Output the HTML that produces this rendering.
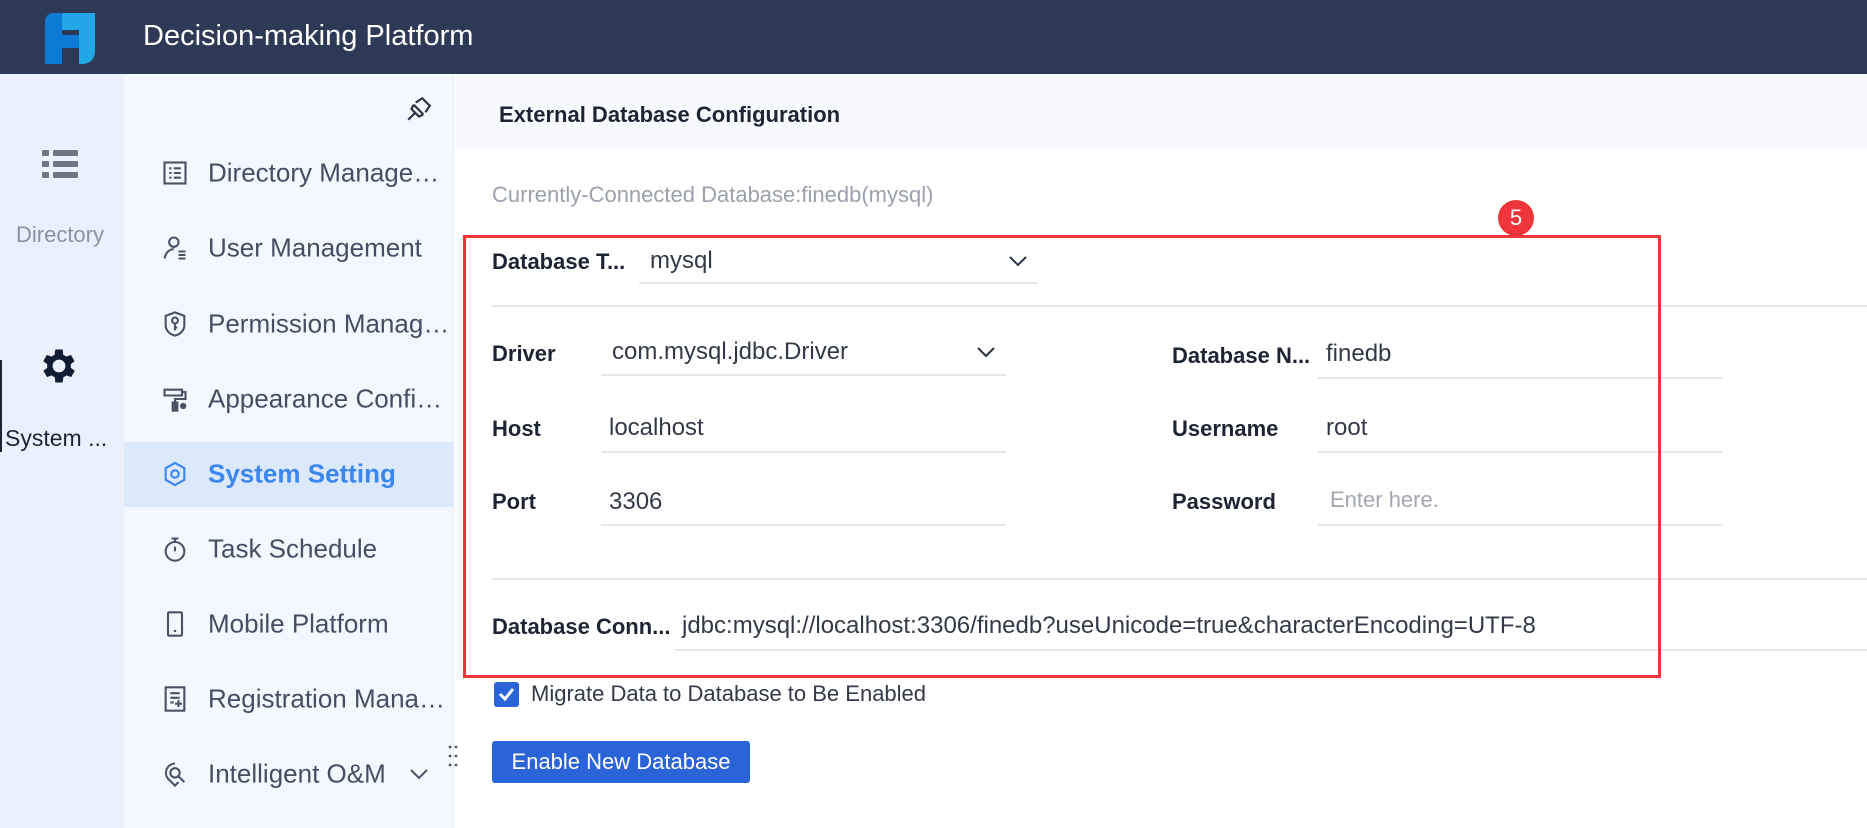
<!DOCTYPE html>
<html><head><meta charset="utf-8"><style>
*{box-sizing:border-box;margin:0;padding:0}
body{width:1867px;height:828px;overflow:hidden;font-family:"Liberation Sans",sans-serif;background:#fff;position:relative}
.a{position:absolute}
.hdr{left:0;top:0;width:1867px;height:74px;background:#2c3a55}
.rail{left:0;top:74px;width:124px;height:754px;background:#eaf1fc}
.side{left:124px;top:74px;width:330px;height:754px;background:#f3f7fe;border-right:1px solid #e8ecf2}
.it{left:208px;font-size:26px;color:#454f63;white-space:nowrap;transform:translateY(-50%)}
.ic{left:161px;width:28px;height:28px;transform:translateY(-50%)}
.lab{font-size:22px;font-weight:bold;color:#1e2433;transform:translateY(-50%);white-space:nowrap}
.val{font-size:24px;color:#333a46;transform:translateY(-50%);white-space:nowrap}
.ul{height:2px;background:#e4e7ec}
</style></head><body>
<div class="a hdr"></div>
<svg class="a" style="left:44px;top:13px" width="52" height="52" viewBox="0 0 52 52">
<path d="M18 0H9C4 0 1 4 1 9v42h17V35h17V22H18z" fill="#0b7bd6"/>
<path d="M18 0h33v38c0 8-5 13-13 13h-3V17H18z" fill="#21a7e6"/>
</svg>
<div class="a" style="left:143px;top:20px;font-size:29px;color:#fff">Decision-making Platform</div>
<div class="a rail"></div>
<div class="a side"></div>
<svg class="a" style="left:42px;top:149px" width="36" height="30" viewBox="0 0 36 30" fill="#6e7686"><rect x="0" y="1" width="7" height="6" rx="1"/><rect x="11" y="1" width="25" height="6" rx="1"/><rect x="0" y="12" width="7" height="6" rx="1"/><rect x="11" y="12" width="25" height="6" rx="1"/><rect x="0" y="23" width="7" height="6" rx="1"/><rect x="11" y="23" width="25" height="6" rx="1"/></svg>
<div class="a" style="left:0;width:120px;text-align:center;top:222px;font-size:22px;color:#8a93a3">Directory</div>
<svg class="a" style="left:37px;top:344px" width="44" height="44" viewBox="0 0 24 24"><path fill="#101c33" d="M19.4 13a7.6 7.6 0 0 0 0-2l2.1-1.6-2-3.5-2.5 1a7 7 0 0 0-1.7-1L15 3h-4l-.4 2.9a7 7 0 0 0-1.7 1l-2.5-1-2 3.5L6.6 11a7.6 7.6 0 0 0 0 2l-2.1 1.6 2 3.5 2.5-1a7 7 0 0 0 1.7 1L11 21h4l.4-2.9a7 7 0 0 0 1.7-1l2.5 1 2-3.5zM13 15.5a3.5 3.5 0 1 1 0-7 3.5 3.5 0 0 1 0 7z" transform="translate(-1 0)"/></svg>
<div class="a" style="left:0;top:360px;width:2px;height:92px;background:#1e2433"></div>
<div class="a" style="left:5px;top:425px;font-size:23px;color:#1e2433">System ...</div>
<svg class="a" style="left:405px;top:95px" width="28" height="28" viewBox="0 0 26 26" fill="none" stroke="#2a3142" stroke-width="2"><path d="M3 23l7-7M8 9l9 9M10 7l6-4 7 7-4 6M8 9l-2 4 7 7 4-2"/></svg>
<div class="a" style="left:124px;top:442px;width:330px;height:65px;background:#dce9fa"></div>
<svg class="a ic" style="top:173px" viewBox="0 0 24 24" fill="none" stroke="#4a5366" stroke-width="1.8"><rect x="3" y="3" width="18" height="18"/><path d="M7 8h2M11 8h6M7 12h2M11 12h6M7 16h2M11 16h6"/></svg>
<div class="a it" style="top:173px">Directory Manage…</div>
<svg class="a ic" style="top:248px" viewBox="0 0 24 24" fill="none" stroke="#4a5366" stroke-width="1.8"><circle cx="11" cy="7" r="4"/><path d="M3 21c1-5 4-8 8-8M15 15h6M15 18h6M15 21h6"/></svg>
<div class="a it" style="top:248px">User Management</div>
<svg class="a ic" style="top:324px" viewBox="0 0 24 24" fill="none" stroke="#4a5366" stroke-width="1.8"><path d="M12 2l8 3v8c0 5-4 8-8 9-4-1-8-4-8-9V5z"/><circle cx="12" cy="9" r="2.5"/><path d="M12 11.5v6M12 15h2"/></svg>
<div class="a it" style="top:324px">Permission Manag…</div>
<svg class="a ic" style="top:399px" viewBox="0 0 24 24" fill="none" stroke="#4a5366" stroke-width="1.8"><path d="M3 4h15v5H3zM18 6h3v6h-9v3"/><rect x="10" y="15" width="4" height="7" fill="#4a5366"/><circle cx="19" cy="18" r="1.8" fill="#4a5366"/></svg>
<div class="a it" style="top:399px">Appearance Confi…</div>
<svg class="a ic" style="top:474px" viewBox="0 0 24 24" fill="none" stroke="#3b86f0" stroke-width="1.8"><path d="M12 2.5l8 4.5v10l-8 4.5-8-4.5V7z"/><circle cx="12" cy="12" r="3.2"/></svg>
<div class="a it" style="top:474px;color:#3b86f0;font-weight:bold">System Setting</div>
<svg class="a ic" style="top:549px" viewBox="0 0 24 24" fill="none" stroke="#4a5366" stroke-width="1.8"><circle cx="12" cy="14" r="8"/><path d="M9 3h6M12 3v3M12 10v4"/></svg>
<div class="a it" style="top:549px">Task Schedule</div>
<svg class="a ic" style="top:624px" viewBox="0 0 24 24" fill="none" stroke="#4a5366" stroke-width="1.8"><rect x="6" y="2" width="12" height="20" rx="1"/><path d="M11 18h2"/></svg>
<div class="a it" style="top:624px">Mobile Platform</div>
<svg class="a ic" style="top:699px" viewBox="0 0 24 24" fill="none" stroke="#4a5366" stroke-width="1.8"><rect x="4" y="2" width="16" height="20"/><path d="M8 7h8M8 11h8M8 15h3M15 13v6M12 16h6"/></svg>
<div class="a it" style="top:699px">Registration Mana…</div>
<svg class="a ic" style="top:774px" viewBox="0 0 24 24" fill="none" stroke="#4a5366" stroke-width="1.8"><path d="M12 3a8 8 0 0 0-6 13l6 6 3-3"/><circle cx="12" cy="11" r="4"/><path d="M15 14l5 5"/></svg>
<div class="a it" style="top:774px">Intelligent O&amp;M</div>
<svg class="a" style="left:409px;top:767px" width="20" height="14" viewBox="0 0 20 14" fill="none" stroke="#4a5366" stroke-width="2"><path d="M2 3l8 8 8-8"/></svg>
<svg class="a" style="left:448px;top:744px" width="10" height="24" viewBox="0 0 10 24" fill="#555"><circle cx="2" cy="3" r="1.4"/><circle cx="8" cy="3" r="1.4"/><circle cx="2" cy="12" r="1.4"/><circle cx="8" cy="12" r="1.4"/><circle cx="2" cy="21" r="1.4"/><circle cx="8" cy="21" r="1.4"/></svg>

<div class="a" style="left:455px;top:74px;width:1412px;height:77px;background:#f7f9fc"></div>
<div class="a lab" style="left:499px;top:115px;font-size:22px">External Database Configuration</div>
<div class="a" style="left:492px;top:182px;font-size:22px;color:#9ba1ab">Currently-Connected Database:finedb(mysql)</div>

<div class="a lab" style="left:492px;top:262px">Database T...</div>
<div class="a val" style="left:650px;top:261px">mysql</div>
<svg class="a" style="left:1008px;top:254px" width="20" height="14" viewBox="0 0 20 14" fill="none" stroke="#2a3142" stroke-width="2"><path d="M2 3l8 8 8-8"/></svg>
<div class="a ul" style="left:639px;top:282px;width:399px"></div>
<div class="a ul" style="left:492px;top:305px;width:1375px"></div>

<div class="a lab" style="left:492px;top:354px">Driver</div>
<div class="a val" style="left:612px;top:352px">com.mysql.jdbc.Driver</div>
<svg class="a" style="left:976px;top:345px" width="20" height="14" viewBox="0 0 20 14" fill="none" stroke="#2a3142" stroke-width="2"><path d="M2 3l8 8 8-8"/></svg>
<div class="a ul" style="left:601px;top:374px;width:405px"></div>
<div class="a lab" style="left:492px;top:429px">Host</div>
<div class="a val" style="left:609px;top:428px">localhost</div>
<div class="a ul" style="left:601px;top:451px;width:405px"></div>
<div class="a lab" style="left:492px;top:502px">Port</div>
<div class="a val" style="left:609px;top:502px">3306</div>
<div class="a ul" style="left:601px;top:524px;width:405px"></div>

<div class="a lab" style="left:1172px;top:356px">Database N...</div>
<div class="a val" style="left:1326px;top:354px">finedb</div>
<div class="a ul" style="left:1318px;top:377px;width:405px"></div>
<div class="a lab" style="left:1172px;top:429px">Username</div>
<div class="a val" style="left:1326px;top:428px">root</div>
<div class="a ul" style="left:1318px;top:451px;width:405px"></div>
<div class="a lab" style="left:1172px;top:502px">Password</div>
<div class="a val" style="left:1330px;top:500px;color:#a3a8b0;font-size:22px">Enter here.</div>
<div class="a ul" style="left:1318px;top:524px;width:405px"></div>

<div class="a ul" style="left:492px;top:578px;width:1375px"></div>
<div class="a lab" style="left:492px;top:627px">Database Conn...</div>
<div class="a val" style="left:682px;top:626px">jdbc:mysql://localhost:3306/finedb?useUnicode=true&amp;characterEncoding=UTF-8</div>
<div class="a ul" style="left:675px;top:649px;width:1192px"></div>

<div class="a" style="left:463px;top:235px;width:1198px;height:443px;border:3px solid #f0363b"></div>
<div class="a" style="left:1498px;top:200px;width:36px;height:36px;border-radius:50%;background:#f0363b;color:#fff;font-size:22px;text-align:center;line-height:36px">5</div>

<div class="a" style="left:494px;top:682px;width:25px;height:25px;background:#2b63d9;border-radius:3px"></div>
<svg class="a" style="left:494px;top:682px" width="25" height="25" viewBox="0 0 25 25" fill="none" stroke="#fff" stroke-width="3"><path d="M6 12l5 5 8-10"/></svg>
<div class="a" style="left:531px;top:681px;font-size:22px;color:#333a46">Migrate Data to Database to Be Enabled</div>
<div class="a" style="left:492px;top:741px;width:258px;height:42px;background:#2b63d9;border-radius:3px;color:#fff;font-size:22px;text-align:center;line-height:42px">Enable New Database</div>
</body></html>
